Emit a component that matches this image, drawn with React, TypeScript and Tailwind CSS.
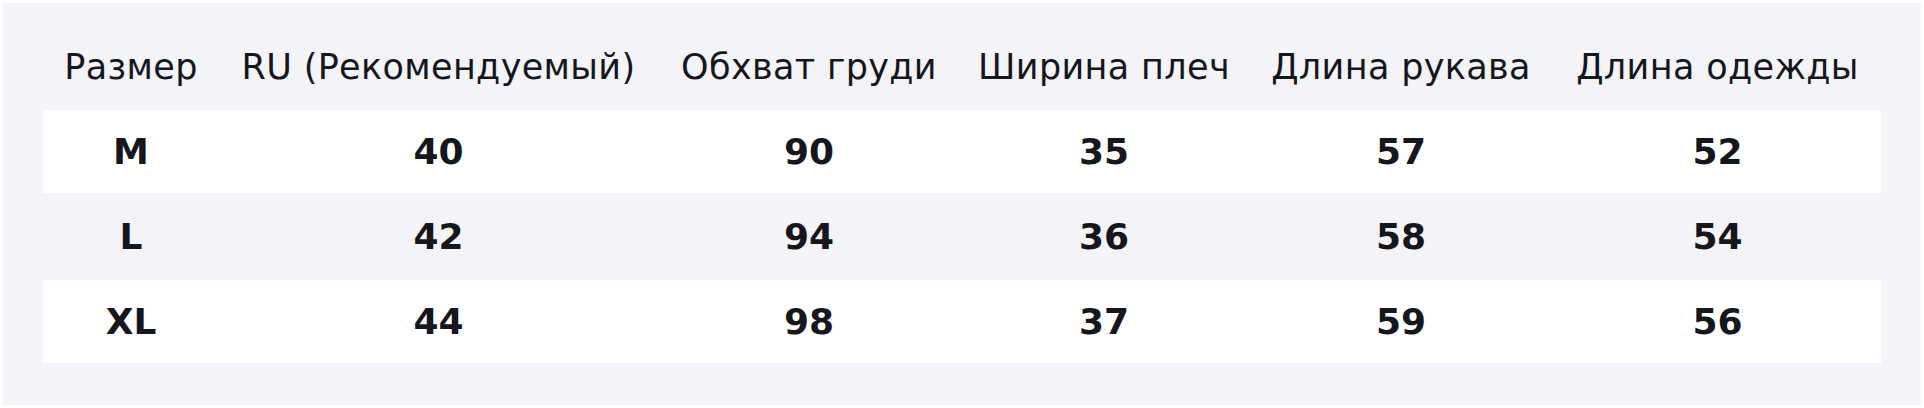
const columns = [
  { title: "Размер", width: "w-[176px]" },
  { title: "RU (Рекомендуемый)", width: "w-[439px]" },
  { title: "Обхват груди", width: "w-[302px]" },
  { title: "Ширина плеч", width: "w-[288px]" },
  { title: "Длина рукава", width: "w-[306px]" },
  { title: "Длина одежды", width: "w-[327px]" },
];

const rows = [
  { cells: ["M", "40", "90", "35", "57", "52"], bg: "bg-white", h: "h-[83px]" },
  { cells: ["L", "42", "94", "36", "58", "54"], bg: "bg-transparent", h: "h-[87px]" },
  { cells: ["XL", "44", "98", "37", "59", "56"], bg: "bg-white", h: "h-[83px]" },
];

export default function App() {
  return (
    <div className="bg-white p-[3px] font-['DejaVu_Sans',sans-serif] text-[#16161d]">
      <div className="bg-[#f3f3f8] px-10 pt-10 pb-[42px]">
        <table className="w-full table-fixed border-collapse">
          <colgroup>
            {columns.map((c) => (
              <col key={c.title} className={c.width} />
            ))}
          </colgroup>
          <thead>
            <tr className="h-[67px]">
              {columns.map((c) => (
                <th
                  key={c.title}
                  className="whitespace-nowrap pb-[24px] pt-[5px] text-center align-top text-[35px] font-normal leading-[38px] tracking-[0.35px]"
                >
                  {c.title}
                </th>
              ))}
            </tr>
          </thead>
          <tbody>
            {rows.map((r) => (
              <tr key={r.cells[0]} className={`${r.bg} ${r.h}`}>
                {r.cells.map((v, i) => (
                  <td
                    key={i}
                    className="p-0 text-center align-middle text-[36px] font-bold leading-none"
                  >
                    {v}
                  </td>
                ))}
              </tr>
            ))}
          </tbody>
        </table>
      </div>
    </div>
  );
}
